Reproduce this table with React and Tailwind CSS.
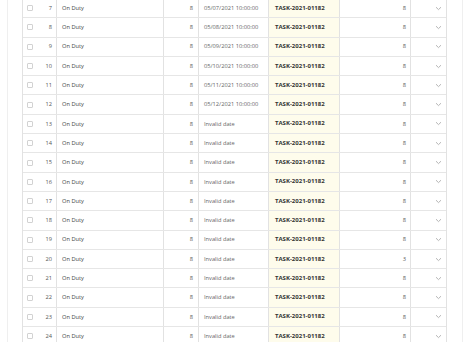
import React from "react";

const rows = [
  { n: 7, date: "05/07/2021 10:00:00", qty: 8 },
  { n: 8, date: "05/08/2021 10:00:00", qty: 8 },
  { n: 9, date: "05/09/2021 10:00:00", qty: 8 },
  { n: 10, date: "05/10/2021 10:00:00", qty: 8 },
  { n: 11, date: "05/11/2021 10:00:00", qty: 8 },
  { n: 12, date: "05/12/2021 10:00:00", qty: 8 },
  { n: 13, date: "Invalid date", qty: 8 },
  { n: 14, date: "Invalid date", qty: 8 },
  { n: 15, date: "Invalid date", qty: 8 },
  { n: 16, date: "Invalid date", qty: 8 },
  { n: 17, date: "Invalid date", qty: 8 },
  { n: 18, date: "Invalid date", qty: 8 },
  { n: 19, date: "Invalid date", qty: 8 },
  { n: 20, date: "Invalid date", qty: 3 },
  { n: 21, date: "Invalid date", qty: 8 },
  { n: 22, date: "Invalid date", qty: 8 },
  { n: 23, date: "Invalid date", qty: 8 },
  { n: 24, date: "Invalid date", qty: 8 },
];

const Chevron = () => (
  <svg width="7" height="5" viewBox="0 0 7 5">
    <path d="M1 1.2 L3.5 3.6 L6 1.2" fill="none" stroke="#b5b5b5" strokeWidth="1" />
  </svg>
);

const App = () => {
  return (
    <div
      className="w-[474px] h-[342px] overflow-hidden bg-white"
      style={{ fontFamily: '"Open Sans", "Noto Sans", sans-serif' }}
    >
      <div className="ml-[7px] w-[456px] h-[360px] border-x border-[#efefef] pl-[14px] pr-[15px] mt-[-1px]">
        <div className="w-[425px] border-x border-[#e2e2e2]">
          {rows.map((r) => (
            <div
              key={r.n}
              className="grid grid-cols-[18px_16px_107px_35px_70px_71px_71px_35px] h-[19.3px] border-b border-[#e6e6e6] text-[5.7px] text-[#555]"
            >
              <div className="flex items-center pl-[4px]">
                <div className="w-[6px] h-[6px] border border-[#d2d2d2] rounded-[1px] bg-white"></div>
              </div>
              <div className="flex items-center justify-end pr-[4px] border-r border-[#e2e2e2]">
                {r.n}
              </div>
              <div className="flex items-center pl-[5px] text-[#444] border-r border-[#e2e2e2]">
                On Duty
              </div>
              <div className="flex items-center justify-end pr-[5px] border-r border-[#e2e2e2]">
                8
              </div>
              <div className="flex items-center pl-[5px] text-[#666] border-r border-[#e2e2e2]">
                {r.date}
              </div>
              <div className="flex items-center pl-[6px] bg-[#fefcec] font-bold text-[6px] text-[#333] border-r border-[#e2e2e2]">
                TASK-2021-01182
              </div>
              <div className="flex items-center justify-end pr-[4px] border-r border-[#e2e2e2]">
                {r.qty}
              </div>
              <div className="flex items-center justify-center pl-[20px]">
                <Chevron />
              </div>
            </div>
          ))}
        </div>
      </div>
    </div>
  );
};

export default App;
